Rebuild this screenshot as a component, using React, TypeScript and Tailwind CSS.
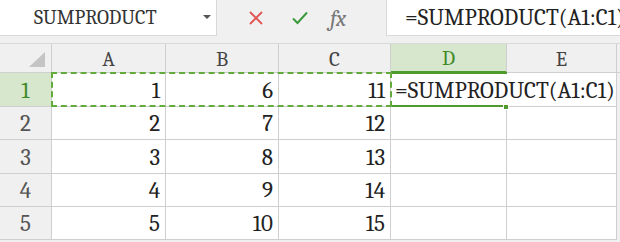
import React from 'react';

const cols = ['A', 'B', 'C', 'D', 'E'];
const rows = [
  { n: 1, h: 'h-[34px]', vals: ['1', '6', '11'] },
  { n: 2, h: 'h-[33px]', vals: ['2', '7', '12'] },
  { n: 3, h: 'h-[34px]', vals: ['3', '8', '13'] },
  { n: 4, h: 'h-[33px]', vals: ['4', '9', '14'] },
  { n: 5, h: 'h-[33px]', vals: ['5', '10', '15'] },
];

const gridCols = 'grid grid-cols-[52px_114px_113px_112px_116px_110px_1fr]';

const App = () => {
  return (
    <div className="w-[620px] h-[242px] overflow-hidden bg-[#f0f0f0] font-serif text-[#222]">
      {/* Toolbar */}
      <div className="flex h-[43px]">
        <div className="relative w-[217px] h-[36px] bg-white border-r border-b border-[#d9d9d9] flex items-center">
          <span className="pl-[34px] text-[20px] leading-none text-[#333]">SUMPRODUCT</span>
          <span className="absolute left-[203px] top-[15px] w-0 h-0 border-l-[4px] border-r-[4px] border-t-[4px] border-l-transparent border-r-transparent border-t-[#555]" />
        </div>
        <div className="w-[169px] h-[36px] flex items-center">
          <svg width="14" height="14" viewBox="0 0 14 14" className="ml-[32px]">
            <path d="M1 1L13 13M13 1L1 13" stroke="#e25555" strokeWidth="1.8" />
          </svg>
          <svg width="16" height="14" viewBox="0 0 16 14" className="ml-[29px]">
            <path d="M1 7.5L5.5 12L15 1.5" stroke="#3a9a3a" strokeWidth="2" fill="none" />
          </svg>
          <span className="ml-[22px] italic text-[23px] leading-none text-[#777] tracking-[-0.5px]">fx</span>
        </div>
        <div className="flex-1 h-[36px] bg-white border-l border-b border-[#d9d9d9] flex items-center overflow-hidden">
          <span className="pl-[18px] text-[23px] leading-none whitespace-nowrap text-[#222]">=SUMPRODUCT(A1:C1)</span>
        </div>
      </div>

      {/* Sheet */}
      <div className="relative">
        <div className={`${gridCols} h-[30px] border-t border-[#d9d9d9]`}>
          <div className="relative bg-[#f0f0f0] border-r border-b border-[#cfcfcf]">
            <svg width="16" height="15" viewBox="0 0 16 15" className="absolute left-[29px] top-[8px]">
              <path d="M16 0L16 15L0 15Z" fill="#c4c4c4" />
            </svg>
          </div>
          {cols.map((c) => (
            <div
              key={c}
              className={`flex items-center justify-center pt-[2px] text-[21px] leading-none border-r border-[#cfcfcf] ${
                c === 'D'
                  ? 'bg-[#d6e7cd] text-[#3f8a26] border-b-2 border-b-[#4d9b2c]'
                  : 'bg-[#f0f0f0] text-[#444] border-b'
              }`}
            >
              {c}
            </div>
          ))}
          <div className="bg-[#f0f0f0] border-b border-[#cfcfcf]" />
        </div>

        {rows.map((r) => (
          <div key={r.n} className={`${gridCols} ${r.h}`}>
            <div
              className={`flex items-end justify-center pb-[4px] text-[23px] leading-none border-r border-b border-[#cfcfcf] ${
                r.n === 1 ? 'bg-[#d6e7cd] text-[#3f8a26]' : 'bg-[#f0f0f0] text-[#555]'
              }`}
            >
              {r.n}
            </div>
            {r.vals.map((v, i) => (
              <div
                key={i}
                className="flex items-end justify-end pr-[5px] pb-[4px] text-[23px] leading-none bg-white border-r border-b border-[#cfcfcf]"
              >
                {v}
              </div>
            ))}
            <div className="bg-white border-r border-b border-[#cfcfcf]" />
            <div className="bg-white border-r border-b border-[#cfcfcf]" />
            <div className="bg-[#f0f0f0]" />
          </div>
        ))}

        {/* Copy marquee A1:C1 */}
        <div className="absolute left-[51px] top-[29px] w-[341px] h-[35px] border-2 border-dashed border-[#62ab3c] pointer-events-none" />

        {/* Active cell D1 */}
        <div className="absolute left-[391px] top-[29px] w-[116px] h-[35px] border-t-2 border-b-2 border-[#4d9b2c] bg-white flex items-end pb-[3px] pl-[4px]">
          <span className="text-[23px] leading-none whitespace-nowrap text-[#222]">=SUMPRODUCT(A1:C1)</span>
        </div>
        <div className="absolute left-[390px] top-[29px] w-[2px] h-[35px] border-l-2 border-dashed border-[#62ab3c]" />
        <div className="absolute left-[503px] top-[61px] w-[6px] h-[6px] bg-[#4d9b2c] border border-white" />
      </div>
    </div>
  );
};

export default App;
